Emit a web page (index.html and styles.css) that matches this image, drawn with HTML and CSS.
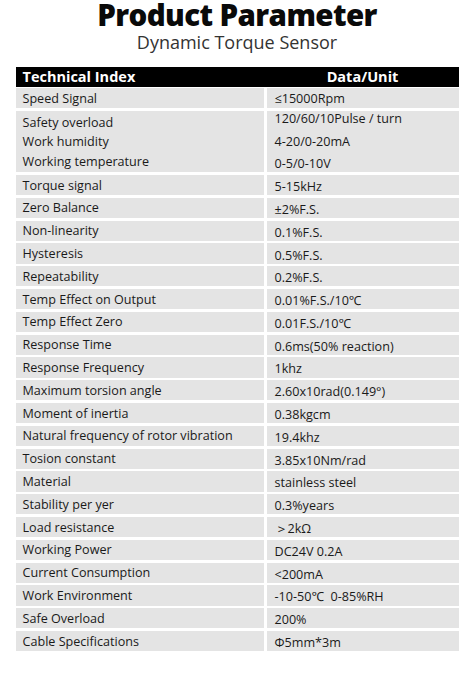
FILE: index.html
```html
<!DOCTYPE html>
<html lang="en">
<head>
<meta charset="utf-8">
<title>Product Parameter</title>
<link rel="stylesheet" href="styles.css">
</head>
<body>
<div class="sheet">
  <h1 class="title">Product Parameter</h1>
  <p class="subtitle">Dynamic Torque Sensor</p>
  <div class="table">
    <div class="row head">
      <div class="cell key">Technical Index</div>
      <div class="cell val">Data/Unit</div>
    </div>
    <div class="row first">
      <div class="cell key">Speed Signal</div>
      <div class="cell val">≤15000Rpm</div>
    </div>
    <div class="row multi">
      <div class="cell key stack">
        <span>Safety overload</span>
        <span>Work humidity</span>
        <span>Working temperature</span>
      </div>
      <div class="cell val stack spread">
        <span>120/60/10Pulse / turn</span>
        <span>4-20/0-20mA</span>
        <span>0-5/0-10V</span>
      </div>
    </div>
    <div class="row"><div class="cell key">Torque signal</div><div class="cell val">5-15kHz</div></div>
    <div class="row"><div class="cell key">Zero Balance</div><div class="cell val">±2%F.S.</div></div>
    <div class="row"><div class="cell key">Non-linearity</div><div class="cell val">0.1%F.S.</div></div>
    <div class="row"><div class="cell key">Hysteresis</div><div class="cell val">0.5%F.S.</div></div>
    <div class="row"><div class="cell key">Repeatability</div><div class="cell val">0.2%F.S.</div></div>
    <div class="row"><div class="cell key">Temp Effect on Output</div><div class="cell val">0.01%F.S./10℃</div></div>
    <div class="row"><div class="cell key">Temp Effect Zero</div><div class="cell val">0.01F.S./10℃</div></div>
    <div class="row"><div class="cell key">Response Time</div><div class="cell val">0.6ms(50% reaction)</div></div>
    <div class="row"><div class="cell key">Response Frequency</div><div class="cell val">1khz</div></div>
    <div class="row"><div class="cell key">Maximum torsion angle</div><div class="cell val">2.60x10rad(0.149°)</div></div>
    <div class="row"><div class="cell key">Moment of inertia</div><div class="cell val">0.38kgcm</div></div>
    <div class="row"><div class="cell key">Natural frequency of rotor vibration</div><div class="cell val">19.4khz</div></div>
    <div class="row"><div class="cell key">Tosion constant</div><div class="cell val">3.85x10Nm/rad</div></div>
    <div class="row"><div class="cell key">Material</div><div class="cell val">stainless steel</div></div>
    <div class="row"><div class="cell key">Stability per yer</div><div class="cell val">0.3%years</div></div>
    <div class="row"><div class="cell key">Load resistance</div><div class="cell val">＞2kΩ</div></div>
    <div class="row"><div class="cell key">Working Power</div><div class="cell val">DC24V 0.2A</div></div>
    <div class="row"><div class="cell key">Current Consumption</div><div class="cell val">&lt;200mA</div></div>
    <div class="row"><div class="cell key">Work Environment</div><div class="cell val">-10-50℃&nbsp;&nbsp;0-85%RH</div></div>
    <div class="row"><div class="cell key">Safe Overload</div><div class="cell val">200%</div></div>
    <div class="row"><div class="cell key">Cable Specifications</div><div class="cell val">Φ5mm*3m</div></div>
  </div>
</div>
</body>
</html>
```

FILE: styles.css
```css
html, body {
  margin: 0;
  padding: 0;
  background: #ffffff;
}

.sheet {
  width: 474px;
  height: 678px;
  font-family: "Open Sans", "Noto Sans", "DejaVu Sans", sans-serif;
  color: #1a1a1a;
  display: flex;
  flex-direction: column;
  align-items: center;
}

.title {
  margin: 0;
  font-size: 29.5px;
  line-height: 30px;
  font-weight: 800;
  color: #0a0a0a;
  letter-spacing: -0.6px;
}

.subtitle {
  margin: 2.3px 0 0;
  font-size: 18px;
  line-height: 20px;
  color: #333333;
}

.table {
  margin-top: 14.7px;
  width: 443px;
  display: flex;
  flex-direction: column;
  gap: 2.5px;
}

.row {
  display: grid;
  grid-template-columns: 248px 192px;
  grid-template-rows: 100%;
  column-gap: 3px;
  height: 20.3px;
  font-size: 12.6px;
}

.row.head {
  background: #000000;
  height: 20px;
  color: #ffffff;
  font-weight: 700;
  font-size: 14.5px;
  margin-bottom: -1.5px;
}

.row.multi {
  height: 61.7px;
}

.cell {
  background: #e4e4e4;
  display: flex;
  align-items: center;
  white-space: nowrap;
  min-height: 0;
  overflow: hidden;
}

.head .cell {
  background: transparent;
}

.key {
  padding-left: 7px;
}

.val {
  padding-left: 8px;
  padding-top: 3px;
}

.head .val {
  justify-content: center;
  padding-left: 0;
  padding-top: 0;
}

.first .val {
  padding-top: 0;
}

.stack {
  flex-direction: column;
  align-items: flex-start;
  justify-content: center;
  line-height: 19.5px;
  padding-top: 1px;
}

.spread {
  justify-content: space-between;
  line-height: 16px;
  padding-top: 0;
  padding-bottom: 0;
}
```
